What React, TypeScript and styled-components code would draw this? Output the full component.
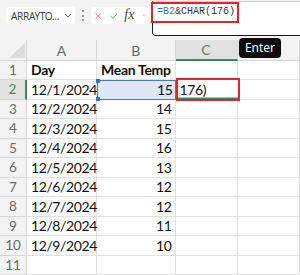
import styled, { createGlobalStyle } from "styled-components";
import { FC } from "react";

const GlobalStyle = createGlobalStyle`
  html, body {
    margin: 0;
    padding: 0;
    background: #ffffff;
    overflow: hidden;
  }
  * {
    box-sizing: border-box;
  }
`;

interface Row {
  day: string;
  temp: string;
}

const rows: Row[] = [
  { day: "12/1/2024", temp: "15" },
  { day: "12/2/2024", temp: "14" },
  { day: "12/3/2024", temp: "15" },
  { day: "12/4/2024", temp: "16" },
  { day: "12/5/2024", temp: "13" },
  { day: "12/6/2024", temp: "12" },
  { day: "12/7/2024", temp: "12" },
  { day: "12/8/2024", temp: "11" },
  { day: "12/9/2024", temp: "10" },
];

const App: FC = () => {
  return (
    <Page>
      <GlobalStyle />
      <TopBar>
        <NameBox>
          <NameText>ARRAYTO...</NameText>
          <Chevron width="8" height="5" viewBox="0 0 8 5">
            <path d="M1 1 L4 4 L7 1" fill="none" stroke="#555" strokeWidth="1" />
          </Chevron>
        </NameBox>
        <Dots>
          <Dot />
          <Dot />
          <Dot />
        </Dots>
        <IconBox>
          <svg width="10" height="10" viewBox="0 0 10 10">
            <path d="M1 1 L9 9 M9 1 L1 9" stroke="#e0474c" strokeWidth="1.2" />
          </svg>
          <svg width="12" height="10" viewBox="0 0 12 10">
            <path d="M1 5 L4.5 8.5 L11 1.5" fill="none" stroke="#3f9b5b" strokeWidth="1.2" />
          </svg>
          <Fx>fx</Fx>
          <Chevron width="7" height="5" viewBox="0 0 8 5">
            <path d="M1 1 L4 4 L7 1" fill="none" stroke="#999" strokeWidth="1" />
          </Chevron>
        </IconBox>
        <FormulaBox>
          <FormulaText>
            <RefText>=B2</RefText>&amp;CHAR(176)
          </FormulaText>
        </FormulaBox>
        <Tooltip>Enter</Tooltip>
      </TopBar>
      <Grid>
        <Corner>
          <svg width="16" height="15" viewBox="0 0 16 15">
            <path d="M16 0 L16 15 L0 15 Z" fill="#dcdcdc" />
          </svg>
        </Corner>
        <ColHeader>A</ColHeader>
        <ColHeader>B</ColHeader>
        <ColHeader active>C</ColHeader>
        <ColHeader />

        <RowHeader>1</RowHeader>
        <Cell bold>Day</Cell>
        <Cell bold>Mean Temp</Cell>
        <Cell />
        <Cell />

        {rows.map((r, i) => {
          const n = i + 2;
          const isActive = n === 2;
          return [
            <RowHeader key={`h${n}`} active={isActive}>
              {n}
            </RowHeader>,
            <Cell key={`a${n}`}>{r.day}</Cell>,
            isActive ? (
              <RefCell key={`b${n}`} align="right">
                {r.temp}
              </RefCell>
            ) : (
              <Cell key={`b${n}`} align="right">
                {r.temp}
              </Cell>
            ),
            isActive ? (
              <EditCell key={`c${n}`}>176)</EditCell>
            ) : (
              <Cell key={`c${n}`} />
            ),
            <Cell key={`d${n}`} />,
          ];
        })}

        <RowHeader>11</RowHeader>
        <Cell />
        <Cell />
        <Cell />
        <Cell />
      </Grid>
    </Page>
  );
};

const Page = styled.div`
  width: 300px;
  height: 275px;
  overflow: hidden;
  background: #ffffff;
  font-family: Lato, "Liberation Sans", sans-serif;
`;

const TopBar = styled.div`
  position: relative;
  height: 40px;
  background: #f3f3f3;
  display: flex;
  align-items: flex-start;
  padding-left: 6px;
`;

const NameBox = styled.div`
  margin-top: 7px;
  width: 69px;
  height: 17px;
  background: #ffffff;
  border-radius: 3px;
  display: flex;
  align-items: center;
  justify-content: space-between;
  padding: 0 3px 0 5px;
`;

const NameText = styled.span`
  font-family: "Noto Sans", sans-serif;
  font-size: 10px;
  color: #444;
  letter-spacing: -0.3px;
`;

const Chevron = styled.svg`
  display: block;
`;

const Dots = styled.div`
  margin-top: 10px;
  width: 16px;
  height: 11px;
  display: flex;
  flex-direction: column;
  align-items: center;
  justify-content: space-between;
`;

const Dot = styled.span`
  width: 2px;
  height: 2px;
  background: #777;
  border-radius: 1px;
`;

const IconBox = styled.div`
  margin-top: 7px;
  width: 58px;
  height: 17px;
  background: #ffffff;
  border-radius: 3px;
  display: flex;
  align-items: center;
  gap: 8px;
  padding: 0 2px 0 4px;
`;

const Fx = styled.span`
  font-family: "Liberation Serif", serif;
  font-style: italic;
  font-size: 14px;
  color: #444;
  line-height: 1;
  margin-top: -2px;
  margin-left: -1px;
`;

const FormulaBox = styled.div`
  margin-top: 1px;
  margin-left: 3px;
  flex: 1;
  height: 35px;
  background: #ffffff;
  border: 1.5px solid #1a1a1a;
  border-top: 1px solid #d0d0d0;
  border-right: none;
  border-bottom-left-radius: 4px;
  position: relative;
`;

const FormulaText = styled.div`
  position: absolute;
  left: -2px;
  top: 0px;
  width: 88px;
  height: 21px;
  border: 2px solid #e3262b;
  font-family: "Liberation Mono", monospace;
  font-size: 10px;
  line-height: 16px;
  padding-left: 4px;
  color: #333;
  background: #ffffff;
`;

const RefText = styled.span`
  color: #3a6fc4;
`;

const Tooltip = styled.div`
  position: absolute;
  left: 239px;
  top: 38px;
  width: 42px;
  height: 20px;
  background: #0d0d0d;
  color: #ffffff;
  border-radius: 4px;
  font-family: "Noto Sans", sans-serif;
  font-size: 12px;
  line-height: 19px;
  text-align: center;
  z-index: 5;
`;

const Grid = styled.div`
  display: grid;
  grid-template-columns: 27px 70px 78.5px 62px 1fr;
  grid-template-rows: 20.5px repeat(11, 19.5px);
`;

const Corner = styled.div`
  background: #f3f3f3;
  border-right: 1px solid #d6d6d6;
  border-bottom: 1px solid #d6d6d6;
  display: flex;
  align-items: flex-end;
  justify-content: flex-end;
  padding: 0 1px 2px 0;
`;

const ColHeader = styled.div<{ active?: boolean }>`
  background: ${({ active }) => (active ? "#e2e2e2" : "#f3f3f3")};
  border-right: 1px solid #d6d6d6;
  border-bottom: ${({ active }) => (active ? "2px solid #3b8a5a" : "1px solid #d6d6d6")};
  color: ${({ active }) => (active ? "#4b8a63" : "#6a6a6a")};
  font-size: 14px;
  display: flex;
  align-items: center;
  justify-content: center;
  padding-top: 1px;
`;

const RowHeader = styled.div<{ active?: boolean }>`
  background: ${({ active }) => (active ? "#e2e2e2" : "#f3f3f3")};
  border-right: ${({ active }) => (active ? "2px solid #3b8a5a" : "1px solid #d6d6d6")};
  border-bottom: 1px solid #d6d6d6;
  color: ${({ active }) => (active ? "#4b8a63" : "#6a6a6a")};
  font-size: 13.5px;
  display: flex;
  align-items: center;
  justify-content: center;
`;

const Cell = styled.div<{ bold?: boolean; align?: "left" | "right" }>`
  border-right: 1px solid #e1e1e1;
  border-bottom: 1px solid #e1e1e1;
  font-size: 14px;
  letter-spacing: ${({ bold }) => (bold ? "-0.3px" : "-0.4px")};
  font-weight: ${({ bold }) => (bold ? 700 : 400)};
  color: #111;
  display: flex;
  align-items: center;
  justify-content: ${({ align }) => (align === "right" ? "flex-end" : "flex-start")};
  padding: 0 3px 0 4px;
  white-space: nowrap;
  overflow: visible;
`;

const RefCell = styled(Cell)`
  position: relative;
  background: #dde7f5;
  border: 1px solid #4a78c2;
  padding-right: 2px;

  &::before,
  &::after {
    content: "";
    position: absolute;
    left: -2.5px;
    width: 4px;
    height: 4px;
    background: #3d6bbf;
  }
  &::before {
    top: -2.5px;
  }
  &::after {
    bottom: -2.5px;
  }
`;

const EditCell = styled(Cell)`
  position: relative;
  z-index: 2;
  margin: -2px -2px -1px 0;
  border: 2px solid #e3262b;
  box-shadow: inset 0 -1.5px 0 #3b8a5a;
  padding-left: 2px;
  background: #ffffff;
`;

export default App;
